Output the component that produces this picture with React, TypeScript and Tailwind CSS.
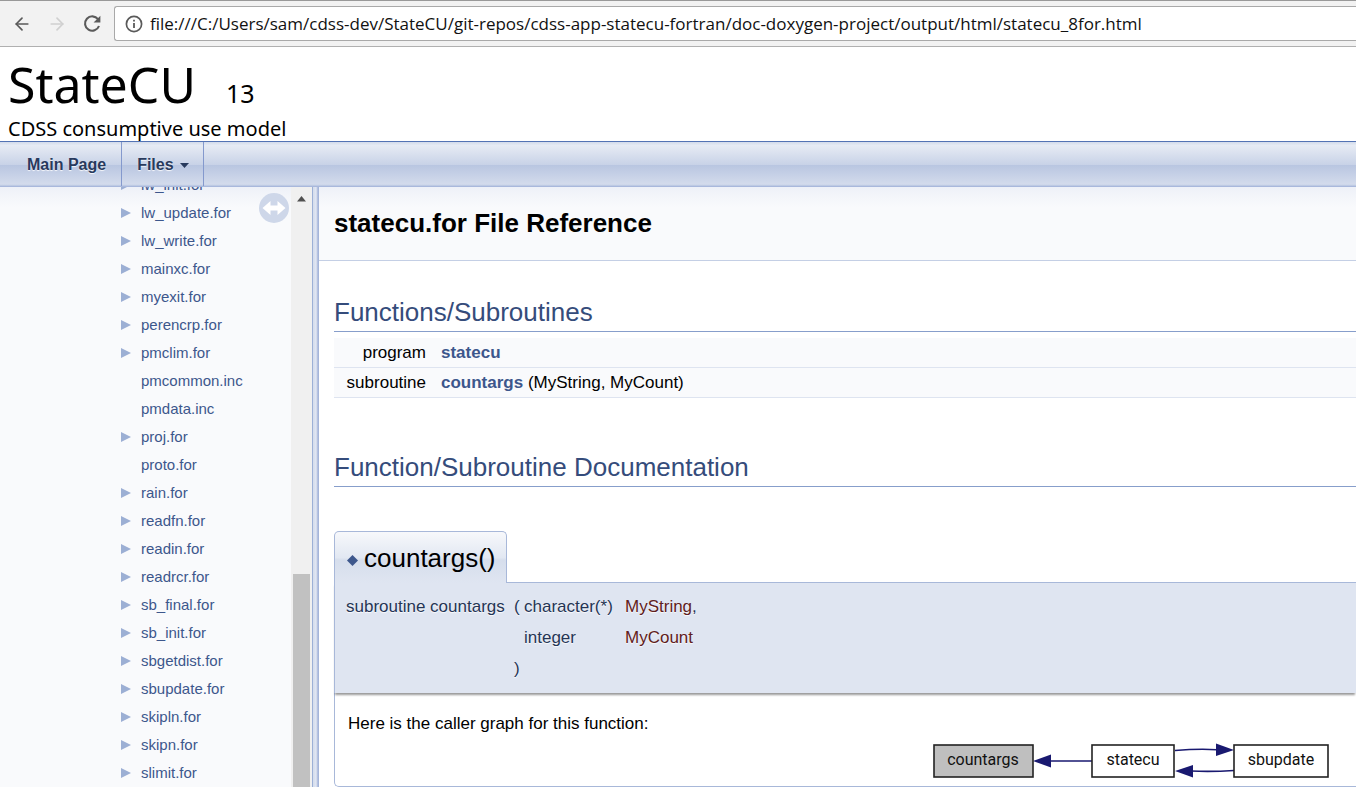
import React from 'react';
import { ArrowLeft, ArrowRight } from 'lucide-react';

interface TreeFile {
  name: string;
  expandable: boolean;
}

const files: TreeFile[] = [
  { name: 'lw_init.for', expandable: true },
  { name: 'lw_update.for', expandable: true },
  { name: 'lw_write.for', expandable: true },
  { name: 'mainxc.for', expandable: true },
  { name: 'myexit.for', expandable: true },
  { name: 'perencrp.for', expandable: true },
  { name: 'pmclim.for', expandable: true },
  { name: 'pmcommon.inc', expandable: false },
  { name: 'pmdata.inc', expandable: false },
  { name: 'proj.for', expandable: true },
  { name: 'proto.for', expandable: false },
  { name: 'rain.for', expandable: true },
  { name: 'readfn.for', expandable: true },
  { name: 'readin.for', expandable: true },
  { name: 'readrcr.for', expandable: true },
  { name: 'sb_final.for', expandable: true },
  { name: 'sb_init.for', expandable: true },
  { name: 'sbgetdist.for', expandable: true },
  { name: 'sbupdate.for', expandable: true },
  { name: 'skipln.for', expandable: true },
  { name: 'skipn.for', expandable: true },
  { name: 'slimit.for', expandable: true },
];

const BrowserBar: React.FC = () => (
  <div className="flex h-[47px] shrink-0 items-center border-t border-b border-t-[#999] border-b-[#b0b0b0] bg-[#f2f2f2] pl-3">
    <button aria-label="Back" className="flex w-5 justify-center text-[#5a5a5a]">
      <ArrowLeft size={22} strokeWidth={2} />
    </button>
    <button aria-label="Forward" className="ml-[15px] flex w-5 justify-center text-[#d0d0d0]">
      <ArrowRight size={22} strokeWidth={2} />
    </button>
    <button aria-label="Reload" className="ml-[15px] flex w-5 justify-center text-[#5a5a5a]">
      <svg width="20" height="20" viewBox="0 0 20 20" fill="none">
        <path d="M16 5.2A7.2 7.2 0 1 0 17 12" stroke="currentColor" strokeWidth="2.1" />
        <path d="M18.400 1.800v6.800h-6.800z" fill="currentColor" />
      </svg>
    </button>
    <div className="ml-3 flex h-[35px] flex-1 items-center rounded-l-[3px] border border-r-0 border-[#a9a9a9] bg-white pl-2.5">
      <svg width="18" height="18" viewBox="0 0 18 18" fill="none" className="shrink-0">
        <circle cx="9" cy="9" r="7.6" stroke="#5a5a5a" strokeWidth="1.7" />
        <path d="M9 8v5M9 4.8v1.8" stroke="#5a5a5a" strokeWidth="1.8" />
      </svg>
      <input
        aria-label="Address"
        readOnly
        value="file:///C:/Users/sam/cdss-dev/StateCU/git-repos/cdss-app-statecu-fortran/doc-doxygen-project/output/html/statecu_8for.html"
        className="ml-[7px] min-w-0 flex-1 bg-transparent font-['Open_Sans','Noto_Sans',sans-serif] text-[17px] text-[#111] outline-none"
      />
    </div>
  </div>
);

const ProjectHeader: React.FC = () => (
  <header className="h-[94px] shrink-0 bg-white px-2 font-['Noto_Sans','Open_Sans',sans-serif] text-black">
    <div className="flex h-[68px] items-baseline gap-[30px]">
      <span className="text-[50px] leading-[74px]">StateCU</span>
      <span className="text-[25px] leading-none">13</span>
    </div>
    <div className="text-[20px] leading-[28px]">CDSS consumptive use model</div>
  </header>
);

const NavBar: React.FC = () => (
  <nav className="flex h-[46px] shrink-0 border-t border-b border-t-[#5373b4] border-b-[#a9b8dc] bg-[linear-gradient(to_bottom,#d3dbeb_0%,#e6ebf4_8%,#c8d2e7_52%,#b9c6e1_53%,#d3dbec_96%,#b5c3e0_100%)] text-[16px] font-bold text-[#283a5d] [text-shadow:0_1px_1px_rgba(255,255,255,0.9)]">
    <a href="#main" className="flex items-center border-r border-[#8499cd] pt-0.5 pr-[15px] pl-[27px]">
      Main Page
    </a>
    <a href="#files" className="flex items-center gap-1.5 border-r border-[#8499cd] pt-0.5 pr-3.5 pl-[15px]">
      Files
      <svg width="9" height="5" viewBox="0 0 9 5" fill="#283a5d">
        <path d="M0 0h9L4.500 5z" />
      </svg>
    </a>
  </nav>
);

const FileTree: React.FC = () => (
  <aside className="relative flex w-[319px] shrink-0 bg-[#f9fafc]">
    <ul className="flex min-w-0 flex-1 flex-col justify-end overflow-hidden bg-[linear-gradient(to_bottom,#eef1f8_0,#f9fafc_20px)] text-[15px] text-[#3d578c]">
      {files.map((file) => (
        <li key={file.name} className="flex h-7 shrink-0 items-center pl-[121px]">
          {file.expandable ? (
            <button aria-label={`Expand ${file.name}`} className="w-5">
              <svg width="10" height="10" viewBox="0 0 10 10" fill="#9cafd4">
                <path d="M0 0l10 5L0 10z" />
              </svg>
            </button>
          ) : (
            <span className="w-5" />
          )}
          <a href={`#${file.name}`}>{file.name}</a>
        </li>
      ))}
    </ul>
    <button aria-label="Sync tree" className="absolute top-1.5 left-[259px]">
      <svg width="30" height="30" viewBox="0 0 30 30">
        <circle cx="15" cy="15" r="15" fill="#ced7e9" />
        <path d="M3.500 15l8-7v4.500h7V8l8 7-8 7v-4.500h-7V22z" fill="#fff" />
      </svg>
    </button>
    <div className="flex w-[21px] flex-col items-center bg-[#f0f0f0]">
      <svg width="9" height="6" viewBox="0 0 9 6" fill="#505050" className="mt-[9px]">
        <path d="M4.500 0L9 5.500H0z" />
      </svg>
      <div className="mt-[372px] w-[17px] flex-1 bg-[#c1c1c1]" />
    </div>
    <div className="w-[7px] bg-[linear-gradient(to_right,#9cb0d6_0_1px,#d6deee_1px_2px,#e3e8f3_4px,#a5b5da_6px,#a5b5da_7px)]" />
  </aside>
);

const CallerGraph: React.FC = () => (
  <svg
    width="396"
    height="36"
    viewBox="0 0 396 36"
    role="img"
    aria-label="Caller graph"
    className="font-['Roboto',sans-serif] text-[16px]"
  >
    <g stroke="#191970" strokeWidth="1.600" fill="none">
      <path d="M116 18h43" />
      <path d="M242 7.500q24-2 42-.800" />
      <path d="M258 28q20 1 43-.500" />
    </g>
    <g fill="#191970">
      <path d="M100 18l18-6.500v13z" />
      <path d="M301 7L283 .500v12.500z" />
      <path d="M242 28l18-6v12.500z" />
    </g>
    <g stroke="#222" strokeWidth="1.600">
      <rect x="1" y="2" width="99" height="32" fill="#bfbfbf" />
      <rect x="159" y="2" width="82" height="32" fill="#fff" />
      <rect x="301" y="2" width="94" height="32" fill="#fff" />
    </g>
    <g fill="#111" textAnchor="middle">
      <text x="50" y="22">countargs</text>
      <text x="200" y="22">statecu</text>
      <text x="348" y="22">sbupdate</text>
    </g>
  </svg>
);

const FunctionTable: React.FC = () => (
  <table className="mt-1.5 w-full border-collapse text-[17px] leading-[29px]">
    <tbody>
      <tr className="border-b border-[#dee4f0] bg-[#f9fafc]">
        <td className="w-[92px] text-right">program</td>
        <td className="pl-[15px]">
          <a href="#statecu" className="font-bold text-[#3d578c]">statecu</a>
        </td>
      </tr>
      <tr className="border-b border-[#dee4f0] bg-[#f9fafc]">
        <td className="w-[92px] text-right">subroutine</td>
        <td className="pl-[15px]">
          <a href="#countargs" className="font-bold text-[#3d578c]">countargs</a> (MyString, MyCount)
        </td>
      </tr>
    </tbody>
  </table>
);

const FunctionDoc: React.FC = () => (
  <section className="mt-11">
    <h2 className="relative z-10 -mb-px flex h-[52px] w-fit items-center gap-1.5 rounded-t-[5px] border border-b-0 border-[#a8b8d9] bg-[linear-gradient(to_bottom,#f7f8fb_0%,#e2e8f2_50%,#d6deec_55%,#dfe5f1_100%)] pt-0.5 pr-2.5 pl-3 text-[26px]">
      <svg width="11" height="11" viewBox="0 0 11 11" fill="#3d578c" className="mt-1">
        <path d="M5.500 0L11 5.500 5.500 11 0 5.500z" />
      </svg>
      countargs()
    </h2>
    <div className="relative h-[111px] border-t border-l border-[#a8b8d9] bg-[#dfe5f1] pt-2 pl-[11px] shadow-[0_3px_2px_-1px_rgba(0,0,0,0.4)]">
      <table className="text-[17px] leading-[31px] text-[#253555] [text-shadow:0_1px_1px_rgba(255,255,255,0.9)]">
        <tbody>
          <tr>
            <td className="w-[168px]">subroutine countargs</td>
            <td className="w-[10px]">(</td>
            <td className="w-[101px]">character(*)</td>
            <td><span className="text-[#602020]">MyString</span>,</td>
          </tr>
          <tr>
            <td />
            <td />
            <td>integer</td>
            <td className="text-[#602020]">MyCount</td>
          </tr>
          <tr>
            <td />
            <td>)</td>
            <td />
            <td />
          </tr>
        </tbody>
      </table>
    </div>
    <div className="rounded-bl-[5px] border-b border-l border-[#a8b8d9] pt-[17px] pb-[7px] pl-[13px]">
      <p className="text-[17px] leading-7">Here is the caller graph for this function:</p>
      <div className="mt-[5px] flex justify-end pr-[27px]">
        <CallerGraph />
      </div>
    </div>
  </section>
);

const App: React.FC = () => (
  <div className="flex h-screen flex-col overflow-hidden bg-white font-['Liberation_Sans',Arial,sans-serif] text-black">
    <BrowserBar />
    <ProjectHeader />
    <NavBar />
    <div className="flex min-h-0 flex-1">
      <FileTree />
      <main className="min-w-0 flex-1 overflow-hidden">
        <div className="flex h-[74px] items-center border-b border-[#c4cfe5] bg-[linear-gradient(to_bottom,#eef1f8_0,#f9fafc_20px)] pl-[15px]">
          <h1 className="text-[26px] font-bold">statecu.for File Reference</h1>
        </div>
        <div className="pl-[15px]">
          <h2 className="mt-8 border-b border-[#879ecb] text-[26px] leading-[38px] text-[#354c7b]">Functions/Subroutines</h2>
          <FunctionTable />
          <h2 className="mt-[50px] border-b border-[#879ecb] text-[26px] leading-[38px] text-[#354c7b]">Function/Subroutine Documentation</h2>
          <FunctionDoc />
        </div>
      </main>
    </div>
  </div>
);

export default App;
